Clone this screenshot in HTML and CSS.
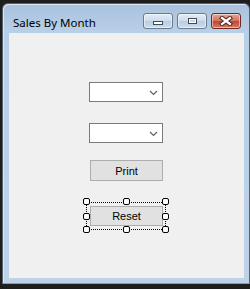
FILE: index.html
```html
<!DOCTYPE html>
<html>
    <head>
        <title>Sales By Month</title>
        <link rel="stylesheet" href="styles.css">
    </head>
  <body>
    <div class="window">
        <div class="titlebar">
            <span class="title">Sales By Month</span>
            <span class="cap-btn min"><i class="min-glyph"></i></span>
            <span class="cap-btn max"><i class="max-glyph"></i></span>
            <span class="cap-btn close">
                <svg width="14" height="10" viewBox="0 0 14 10">
                    <path d="M3 2 L11 8 M11 2 L3 8" stroke="#4a2a26" stroke-width="4.2" stroke-linecap="square"/>
                    <path d="M3 2 L11 8 M11 2 L3 8" stroke="#fff" stroke-width="2.2" stroke-linecap="square"/>
                </svg>
            </span>
        </div>
        <div class="client">
            <div class="combo">
                <svg class="chev" width="9" height="6" viewBox="0 0 9 6"><path d="M1 1 L4.5 4.5 L8 1" fill="none" stroke="#606060" stroke-width="1.2"/></svg>
            </div>
            <div class="combo second">
                <svg class="chev" width="9" height="6" viewBox="0 0 9 6"><path d="M1 1 L4.5 4.5 L8 1" fill="none" stroke="#606060" stroke-width="1.2"/></svg>
            </div>
            <button class="btn">Print</button>
            <div class="selected">
                <button class="btn">Reset</button>
                <div class="sel-box"></div>
                <i class="handle" style="left:-7px;top:-8px"></i>
                <i class="handle" style="left:33px;top:-8px"></i>
                <i class="handle" style="left:72px;top:-8px"></i>
                <i class="handle" style="left:-7px;top:7px"></i>
                <i class="handle" style="left:72px;top:7px"></i>
                <i class="handle" style="left:-7px;top:20px"></i>
                <i class="handle" style="left:33px;top:20px"></i>
                <i class="handle" style="left:72px;top:20px"></i>
            </div>
        </div>
    </div>
  </body>
</html>
```

FILE: styles.css
```css
* {
    margin: 0;
    padding: 0;
    box-sizing: border-box;
}
html, body {
    height: 100%;
}
body {
    background: #1e1e1e;
    font: 12px 'Noto Sans', 'Liberation Sans', sans-serif;
}
.window {
    margin: 3px 0 0 2px;
    width: 248px;
    height: 281px;
    padding: 0 5px 5px 6px;
    border: 1px solid #56616e;
    border-bottom: 1px solid #22c6e6;
    border-radius: 6px 6px 0 0;
    background: linear-gradient(#a9c1dc, #b8cfe8 28px, #bed3ea);
    box-shadow: inset 1px 1px 0 #d9e6f3;
}
.titlebar {
    display: flex;
    align-items: flex-start;
    gap: 4px;
    height: 29px;
    padding: 9px 3px 0 4px;
}
.title {
    flex: 1;
    color: #000;
    font-size: 11.5px;
    line-height: 16px;
    padding-top: 2px;
}
.cap-btn {
    display: flex;
    align-items: center;
    justify-content: center;
    width: 30px;
    height: 16px;
    border: 1px solid #6b7a8d;
    border-radius: 3px;
    background: linear-gradient(#e3ecf6, #cddbec 50%, #b9cce3 50%, #ccdcee);
    box-shadow: inset 0 0 0 1px rgba(255, 255, 255, .5);
}
.min-glyph {
    display: block;
    width: 10px;
    height: 4px;
    margin-top: 4px;
    border: 1px solid #3f4a57;
    background: #fff;
}
.max-glyph {
    display: block;
    width: 9px;
    height: 6px;
    border: 1px solid #3f4a57;
    background: #c9d8ea;
    box-shadow: inset 0 0 0 1px #fff;
}
.close {
    border-color: #6c2b22;
    background: linear-gradient(#e7a694, #d5705b 50%, #c0432f 50%, #d67a62);
}
.close svg {
    display: block;
}
.client {
    height: 245px;
    padding: 49px 0 0 80px;
    background: #f0f0f0;
}
.combo {
    position: relative;
    width: 74px;
    height: 20px;
    margin-bottom: 21px;
    border: 1px solid #7a7a7a;
    background: #fff;
}
.combo.second {
    margin-bottom: 17px;
}
.chev {
    position: absolute;
    right: 4px;
    top: 7px;
}
.btn {
    display: block;
    width: 73px;
    height: 21px;
    margin-left: 1px;
    border: 1px solid #adadad;
    background: #e1e1e1;
    color: #000;
    font: 11px 'Liberation Sans', Arial, sans-serif;
}
.selected {
    position: relative;
    width: 73px;
    margin: 25px 0 0 1px;
}
.selected .btn {
    height: 20px;
    margin-left: 0;
}
.sel-box {
    position: absolute;
    left: -4px;
    top: -4px;
    width: 80px;
    height: 28px;
    border: 1px dotted #000;
}
.handle {
    position: absolute;
    width: 7px;
    height: 7px;
    border: 1px solid #000;
    border-radius: 2px;
    background: #fff;
}
```
